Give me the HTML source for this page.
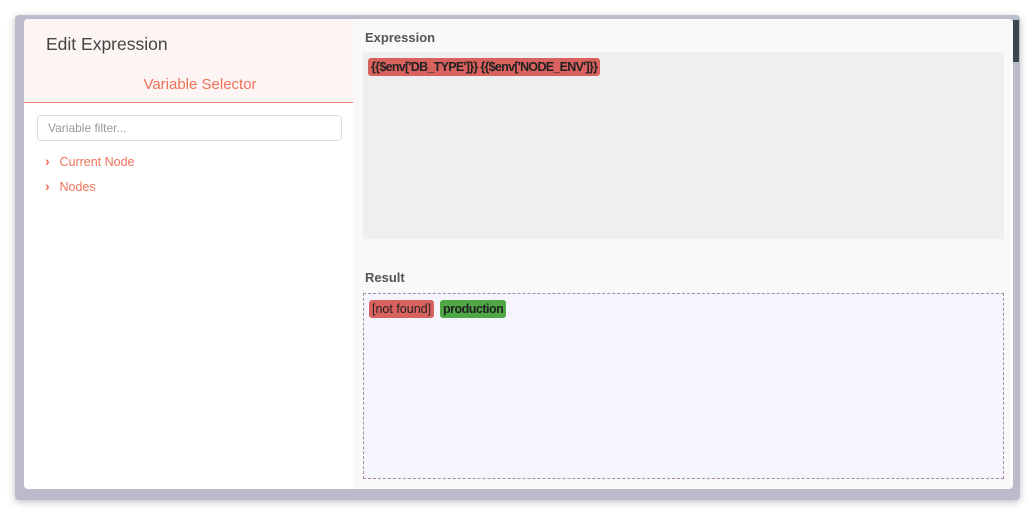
<!DOCTYPE html>
<html><head><meta charset="utf-8"><style>
*{margin:0;padding:0;box-sizing:border-box}
body{width:1035px;height:514px;background:#fff;font-family:"Liberation Sans",sans-serif;position:relative;overflow:hidden}
.frame{position:absolute;left:15px;top:15px;width:1005px;height:485px;background:#bdbbcb;border-radius:4px;box-shadow:0 2px 8px rgba(0,0,0,.25)}
.dlg{position:absolute;left:24px;top:19px;width:989px;height:470px;background:#fff;border-radius:4px;overflow:hidden}
.left{position:absolute;left:0;top:0;width:329px;height:470px;background:#fff}
.hdr{height:84px;background:#fdf5f3;border-bottom:1.5px solid #f0806a;position:relative}
.title{position:absolute;left:22px;top:15px;font-size:17.5px;color:#444}
.vs{position:absolute;left:0;width:352px;top:57px;text-align:center;color:#f0725a;font-size:15px}
.filter{position:absolute;left:13px;top:96px;width:305px;height:26px;border:1px solid #ddd;border-radius:4px;font-size:12px;color:#999;padding:5px 10px}
.it{position:absolute;left:21px;color:#f0725a;font-size:12.5px}
.it b{display:inline-block;width:11px;font-weight:bold;font-size:14px;line-height:12px}
.right{position:absolute;left:329px;top:0;width:660px;height:470px;background:#f9f9f9}
.lab{position:absolute;left:12px;font-size:13px;font-weight:bold;color:#555}
.expr{position:absolute;left:10px;top:33px;width:641px;height:187px;background:#efefef}
.tag{position:absolute;font-weight:bold;font-size:12.5px;color:#222;border-radius:3px;padding:2px 3px;letter-spacing:-0.5px}
.res{position:absolute;left:10px;top:274px;width:641px;height:186px;background:#f6f5fd;border:1px dashed #a78ba0}
.sb{position:absolute;left:1013px;top:20px;width:6px;height:42px;background:#3a4650}
</style></head><body>
<div class="frame"></div>
<div class="dlg">
 <div class="left">
  <div class="hdr"><div class="title">Edit Expression</div><div class="vs">Variable Selector</div></div>
  <div class="filter">Variable filter...</div>
  <div class="it" style="top:136px"><b>›</b> Current Node</div>
  <div class="it" style="top:161px"><b>›</b> Nodes</div>
 </div>
 <div class="right">
  <div class="lab" style="top:11px">Expression</div>
  <div class="expr"><div class="tag" style="left:5px;top:6px;background:#d9625e;letter-spacing:-0.7px">{{$env['DB_TYPE']}} {{$env['NODE_ENV']}}</div></div>
  <div class="lab" style="top:251px">Result</div>
  <div class="res">
   <div class="tag" style="left:5px;top:6px;background:#d9625e;font-weight:normal;font-size:12.5px;letter-spacing:0">[not found]</div>
   <div class="tag" style="left:76px;top:6px;background:#4ea846">production</div>
  </div>
 </div>
</div>
<div class="sb"></div>
</body></html>
